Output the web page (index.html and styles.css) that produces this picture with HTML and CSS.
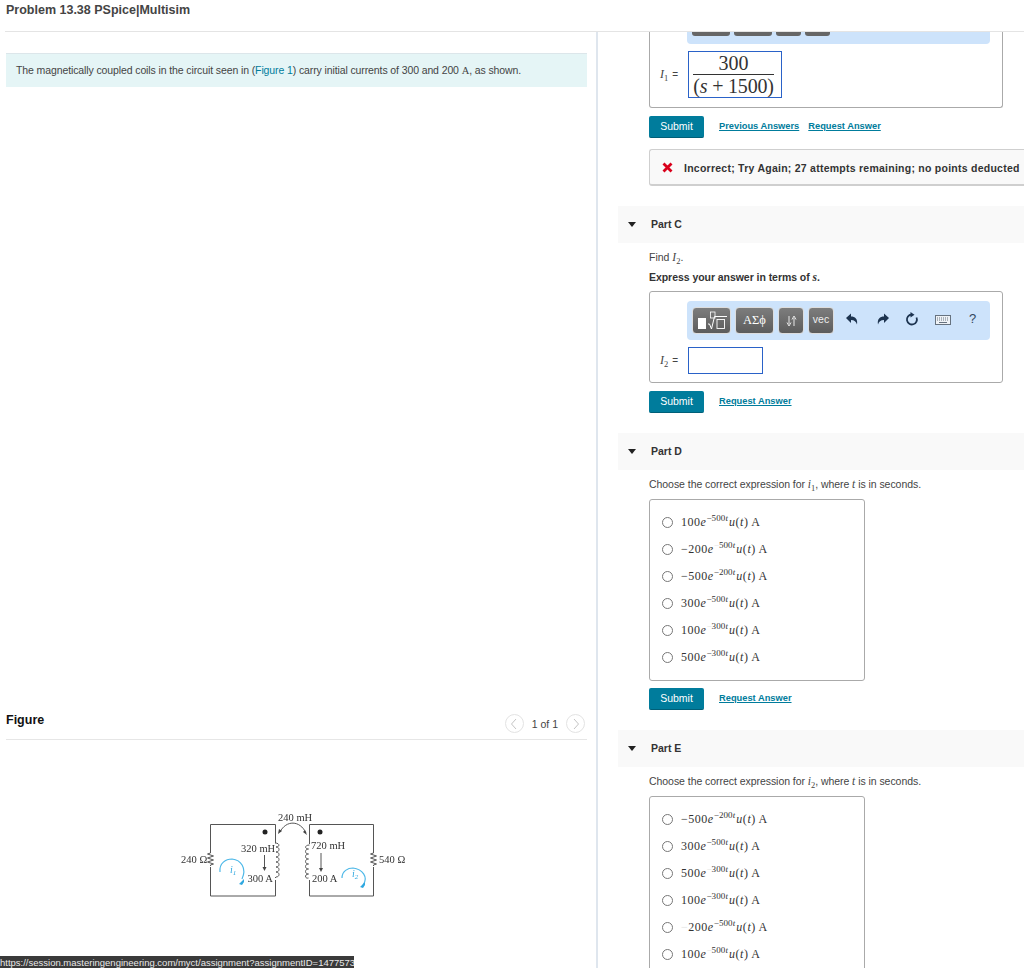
FILE: index.html
```html
<!DOCTYPE html>
<html lang="en">
<head>
<meta charset="utf-8">
<title>Problem 13.38 PSpice|Multisim</title>
<link rel="stylesheet" href="styles.css">
</head>
<body>
<header class="top"><h1>Problem 13.38 PSpice|Multisim</h1></header>
<main class="split">
  <section class="left">
    <p class="intro">The magnetically coupled coils in the circuit seen in (<a href="#f">Figure 1</a>) carry initial currents of 300 and 200 <span class="rm">A</span>, as shown.</p>
    <div class="fighead">
      <h2>Figure</h2>
      <div class="pager">
        <span class="circle"><svg width="8" height="12" viewBox="0 0 8 12"><path d="M6 1 1.500 6 6 11" fill="none" stroke="#c4c4c4" stroke-width="1"/></svg></span>
        <span class="count">1 of 1</span>
        <span class="circle"><svg width="8" height="12" viewBox="0 0 8 12"><path d="M2 1 6.500 6 2 11" fill="none" stroke="#c4c4c4" stroke-width="1"/></svg></span>
      </div>
    </div>
    <svg class="circuit" width="240" height="110" viewBox="0 0 240 110">
      <g fill="none" stroke="#555" stroke-width="1">
        <path d="M105.500 43V24.500H40.500V53M40.500 67V96H105.500V80"/>
        <path d="M139.500 44V24.500H203.500V53M203.500 67V96H139.500V80"/>
        <path d="M40.500 53l-3 1 6 2-6 2 6 2-6 2 6 2-3 1 0 1"/>
        <path d="M203.500 53l-3 1 6 2-6 2 6 2-6 2 6 2-3 1 0 1"/>
        <path d="M105 43c5 0 5 4 1 4 4 0 4 5 0 5 4 0 4 5 0 5 4 0 4 5 0 5 4 0 4 5 0 5 4 0 4 5 0 5 4 0 4 5 0 5l-1 1"/>
        <path d="M139.500 45c-5 0-5 4-1 4-4 0-4 5 0 5-4 0-4 5 0 5-4 0-4 5 0 5-4 0-4 5 0 5-4 0-4 5 0 5-4 0-4 5 0 4"/>
        <path d="M110 32c6-12 20-12 26 1"/>
        <path d="M94.500 55V68M151 53V69"/>
      </g>
      <path d="M108 34l1-5 3 2zM137 35l-4-3 2-2zM92.500 67h4l-2 4zM149 68h4l-2 4z" fill="#444"/>
      <circle cx="95" cy="32" r="2.500" fill="#222"/><circle cx="150" cy="32" r="2.500" fill="#222"/>
      <g fill="none" stroke="#4db8e8" stroke-width="1.200">
        <path d="M50 72c-1-9 6-13 12-13 9 1 15 9 10 20"/>
        <path d="M172 78c0-7 6-10 11-10 9 1 16 9 10 17"/>
      </g>
      <path d="M69 84l5-5 0 3-2 3zM190 87l5-5 0 3-2 3z" fill="#2fa8e0"/>
      <g class="cap">
        <text x="108" y="20.500">240 mH</text>
        <text x="71" y="51.500">320 mH</text>
        <text x="141" y="48.500">720 mH</text>
        <text x="11" y="62.500">240 Ω</text>
        <text x="209" y="62.500">540 Ω</text>
        <text x="77.500" y="81.500">300 A</text>
        <text x="142" y="81.500">200 A</text>
      </g>
      <g class="capi"><text x="60" y="73">i<tspan class="sub" dy="1.500">1</tspan></text><text x="182" y="77">i<tspan class="sub" dy="1.500">2</tspan></text></g>
    </svg>
  </section>
  <section class="right">
    <div class="part-b">
      <div class="answer first">
        <div class="toolbar clipped"><i class="stub w38"></i><i class="stub w38"></i><i class="stub w25"></i><i class="stub w25"></i></div>
        <div class="eq-row">
          <span class="lab"><em>I</em><sub>1</sub>=</span>
          <div class="input filled"><span class="frac"><span class="num">300</span><span class="den">(<em>s</em> + 1500)</span></span></div>
        </div>
      </div>
      <div class="actions"><a class="btn" href="#s">Submit</a><a class="lnk first-lnk" href="#p">Previous Answers</a><a class="lnk" href="#r">Request Answer</a></div>
      <div class="wrong">
        <svg width="11" height="11" viewBox="0 0 11 11"><path d="M1.500 1.500 9.500 9.500M9.500 1.500 1.500 9.500" stroke="#d9001b" stroke-width="2.800"/></svg>
        <span>Incorrect; Try Again; 27 attempts remaining; no points deducted</span>
      </div>
    </div>

    <div class="part"><i class="tri"></i><b>Part C</b></div>
    <div class="body">
      <p class="find">Find <span class="mi">I</span><sub class="ms">2</sub>.</p>
      <p class="express">Express your answer in terms of <span class="mi">s</span>.</p>
      <div class="answer">
        <div class="toolbar">
          <span class="tool t1">
            <i class="blk"></i>
            <svg width="20" height="20" viewBox="0 0 20 20"><g fill="none" stroke="#fff"><path d="M1 13h1.500l2 5L7.500 5.500H20" stroke-width="1"/><rect x="3.500" y="1" width="4.500" height="6" stroke-width=".8"/><rect x="10" y="8.500" width="7.500" height="9" stroke-width=".9"/></g></svg>
          </span>
          <span class="tool t2">ΑΣϕ</span>
          <span class="tool t3"><svg width="11" height="12" viewBox="0 0 11 12"><path d="M3 1V9M1 7.500 3 11 5 7.500M8 11V3M6 4.500 8 1 10 4.500" fill="none" stroke="#e8e8e8" stroke-width="1"/></svg></span>
          <span class="tool t4">vec</span>
          <span class="ico i1"><svg width="14" height="14" viewBox="0 0 14 14"><path d="M1 6 6 1.500V4.500C10 4.500 13 7 12 12.500 11 9.500 9.500 8 6 8V11Z" fill="#1d3450"/></svg></span>
          <span class="ico i2"><svg width="14" height="14" viewBox="0 0 14 14"><path d="M13 6 8 1.500V4.500C4 4.500 1 7 2 12.500 3 9.500 4.500 8 8 8V11Z" fill="#1d3450"/></svg></span>
          <span class="ico i3"><svg width="14" height="14" viewBox="0 0 14 14"><path d="M6.500 2.500A5 5 0 1 0 11.500 5.500" fill="none" stroke="#1d3450" stroke-width="1.800"/><path d="M5.500 0 9.500 2.800 5.500 5.500Z" fill="#1d3450"/></svg></span>
          <span class="ico i4"><svg width="16" height="10" viewBox="0 0 16 10"><rect x=".5" y=".5" width="15" height="9" fill="#eef2f6" stroke="#66727f"/><path d="M2 3h12M2 5h12" stroke="#66727f" stroke-dasharray="1 1"/><path d="M4 7.500h8" stroke="#66727f"/></svg></span>
          <span class="help">?</span>
        </div>
        <div class="eq-row">
          <span class="lab"><em>I</em><sub>2</sub>=</span>
          <div class="input empty"></div>
        </div>
      </div>
      <div class="actions"><a class="btn" href="#s">Submit</a><a class="lnk first-lnk" href="#r">Request Answer</a></div>
    </div>

    <div class="part"><i class="tri"></i><b>Part D</b></div>
    <div class="body">
      <p class="choose">Choose the correct expression for <span class="mi">i</span><sub class="ms">1</sub>, where <span class="mi">t</span> is in seconds.</p>
      <div class="options">
        <div class="opt"><i class="radio"></i><span class="ex">100<em>e</em><sup>−500<em>t</em></sup><em>u</em>(<em>t</em>) A</span></div>
        <div class="opt"><i class="radio"></i><span class="ex">−200<em>e</em><sup><span class="faint">−</span>500<em>t</em></sup><em>u</em>(<em>t</em>) A</span></div>
        <div class="opt"><i class="radio"></i><span class="ex">−500<em>e</em><sup>−200<em>t</em></sup><em>u</em>(<em>t</em>) A</span></div>
        <div class="opt"><i class="radio"></i><span class="ex">300<em>e</em><sup>−500<em>t</em></sup><em>u</em>(<em>t</em>) A</span></div>
        <div class="opt"><i class="radio"></i><span class="ex">100<em>e</em><sup><span class="faint">−</span>300<em>t</em></sup><em>u</em>(<em>t</em>) A</span></div>
        <div class="opt"><i class="radio"></i><span class="ex">500<em>e</em><sup>−300<em>t</em></sup><em>u</em>(<em>t</em>) A</span></div>
      </div>
      <div class="actions tight"><a class="btn" href="#s">Submit</a><a class="lnk first-lnk" href="#r">Request Answer</a></div>
    </div>

    <div class="part"><i class="tri"></i><b>Part E</b></div>
    <div class="body">
      <p class="choose">Choose the correct expression for <span class="mi">i</span><sub class="ms">2</sub>, where <span class="mi">t</span> is in seconds.</p>
      <div class="options">
        <div class="opt"><i class="radio"></i><span class="ex">−500<em>e</em><sup>−200<em>t</em></sup><em>u</em>(<em>t</em>) A</span></div>
        <div class="opt"><i class="radio"></i><span class="ex">300<em>e</em><sup>−500<em>t</em></sup><em>u</em>(<em>t</em>) A</span></div>
        <div class="opt"><i class="radio"></i><span class="ex">500<em>e</em><sup><span class="faint">−</span>300<em>t</em></sup><em>u</em>(<em>t</em>) A</span></div>
        <div class="opt"><i class="radio"></i><span class="ex">100<em>e</em><sup>−300<em>t</em></sup><em>u</em>(<em>t</em>) A</span></div>
        <div class="opt"><i class="radio"></i><span class="ex"><span class="faint">−</span>200<em>e</em><sup>−500<em>t</em></sup><em>u</em>(<em>t</em>) A</span></div>
        <div class="opt"><i class="radio"></i><span class="ex">100<em>e</em><sup><span class="faint">−</span>500<em>t</em></sup><em>u</em>(<em>t</em>) A</span></div>
      </div>
    </div>
  </section>
</main>
<div class="status">https://session.masteringengineering.com/myct/assignment?assignmentID=1477573</div>
</body>
</html>
```
FILE: styles.css
```css
* { box-sizing: border-box; }
html, body { margin: 0; height: 968px; overflow: hidden; background: #fff; }
body { font-family: "Liberation Sans", Arial, sans-serif; font-size: 10.5px; color: #333; position: relative; }
p, h1, h2 { margin: 0; }
a { text-decoration: none; }

.top { height: 32px; margin-left: 5px; border-bottom: 1px solid #e4e4e4; padding: 3px 0 0 1px; }
h1 { font-size: 12.5px; line-height: 15px; font-weight: bold; color: #444; }

.split { display: grid; grid-template-columns: 598px 1fr; height: 936px; }
.left { border-right: 2px solid #dfe6ee; padding: 21px 0 0 6px; height: 936px; overflow: hidden; }
.intro { width: 581px; height: 34px; background: #e5f5f6; border-top: 1px solid #dce6ea; padding-left: 10px; line-height: 32px; font-size: 10.500px; letter-spacing: -.11px; color: #444; white-space: nowrap; }
.intro a { color: #007c9c; }
.rm { font-family: "Liberation Serif", serif; }

.fighead { width: 581px; margin-top: 620px; height: 33px; border-bottom: 1px solid #e6e6e6; display: flex; justify-content: space-between; align-items: flex-start; padding-top: 6px; }
h2 { font-size: 12.5px; line-height: 15px; color: #111; font-weight: bold; }
.pager { display: flex; align-items: center; gap: 8px; padding: 1px 2px 0 0; }
.circle { width: 19px; height: 19px; border: 1px solid #e3e3e3; border-radius: 50%; display: flex; align-items: center; justify-content: center; }
.count { font-size: 10.500px; color: #444; }

.circuit { display: block; margin: 60px 0 0 164px; filter: blur(.3px); }
.cap text { font-family: "Liberation Serif", serif; font-size: 10.500px; fill: #333; }
.capi text { font-family: "Liberation Serif", serif; font-style: italic; font-size: 10px; fill: #2fa8e0; }
.capi .sub { font-size: 7px; }

.right { overflow: hidden; height: 936px; }
.part-b { padding: 0 0 0 51px; }
.answer { width: 354px; height: 92px; border: 1px solid #aaa; border-radius: 3px; padding: 9px 12px 0 10px; }
.answer.first { height: 76px; border-top: 0; border-radius: 0 0 3px 3px; padding-top: 0; }

.toolbar { margin-left: 27px; width: 303px; height: 39px; background: #cde3fb; border-radius: 4px; display: flex; align-items: center; padding-left: 5px; position: relative; }
.toolbar.clipped { height: 12px; border-radius: 0 0 4px 4px; gap: 4px; align-items: flex-start; }
.stub { display: block; height: 4px; background: #666; border-radius: 0 0 3px 3px; }
.w38 { width: 38px; } .w25 { width: 25px; }

.tool { height: 27px; background: linear-gradient(#7d7d7d, #5c5c5c); border: 1px solid #ddd; border-radius: 4px; color: #fff; display: flex; align-items: center; justify-content: center; }
.t1 { width: 39px; margin-right: 4px; gap: 1px; padding-left: 2px; }
.blk { display: block; width: 8px; height: 11px; background: #fff; margin-top: 5px; }
.t2 { width: 39px; margin-right: 4px; font-family: "Liberation Serif", serif; font-size: 12.500px; }
.t3 { width: 26px; margin-right: 4px; }
.t4 { width: 26px; font-size: 10.500px; padding-bottom: 3px; color: #eee; }
.ico { width: 14px; height: 16px; display: flex; align-items: center; justify-content: center; position: absolute; top: 10px; }
.i1 { left: 158px; } .i2 { left: 189px; } .i3 { left: 218px; } .i4 { left: 248px; width: 16px; top: 11px; }
.help { position: absolute; left: 282px; top: 10px; font-size: 13px; line-height: 16px; color: #33475c; }

.eq-row { display: flex; align-items: center; margin-top: 7px; }
.lab { width: 28px; font-size: 10px; color: #444; white-space: nowrap; }
.lab em { font-family: "Liberation Serif", serif; font-size: 12px; }
.lab sub { font-size: 8.500px; line-height: 0; font-family: "Liberation Serif", serif; margin-right: 4px; }
.input { border: 1px solid #2a62c8; }
.input.empty { width: 75px; height: 27px; }
.input.filled { width: 94px; height: 47px; display: flex; justify-content: center; align-items: center; padding-right: 3px; }
.frac { display: flex; flex-direction: column; align-items: stretch; font-family: "Liberation Serif", serif; font-size: 20px; line-height: 22px; color: #333; text-align: center; }
.num { border-bottom: 1px solid #333; height: 23px; }
.den { white-space: nowrap; letter-spacing: -.2px; }

.actions { display: flex; align-items: center; margin-top: 8px; height: 22px; }
.tight { margin-top: 7px; }
.btn { width: 55px; height: 22px; background: #007c9c; border-radius: 2px; color: #fff; font-size: 10.500px; line-height: 21px; text-align: center; border-bottom: 1px solid #005f78; }
.lnk { color: #007c9c; font-size: 9.300px; font-weight: bold; text-decoration: underline; margin: -2px 0 0 9px; }
.first-lnk { margin-left: 15px; }
.wrong { margin-top: 11px; width: 400px; height: 37px; background: #f9f9f9; border: 1px solid #cfcfcf; border-right: 0; border-bottom-width: 2px; border-radius: 3px 0 0 3px; display: flex; align-items: center; padding-left: 12px; gap: 11px; }
.wrong span { font-size: 10.500px; font-weight: bold; color: #333; letter-spacing: .25px; white-space: nowrap; padding-top: 1px; }

.part { margin: 20px 0 0 20px; height: 37px; background: #f9f9f9; display: flex; align-items: center; padding-left: 10px; }
.part b { font-size: 10.500px; color: #333; margin: -1px 0 0 15px; }
.tri { display: block; width: 0; height: 0; border-left: 4px solid transparent; border-right: 4px solid transparent; border-top: 5px solid #222; margin-top: -1px; }
.body { padding-left: 51px; }
.mi { font-family: "Liberation Serif", serif; font-style: italic; font-size: 11.500px; }
.ms { font-family: "Liberation Serif", serif; font-size: 8.500px; line-height: 0; }
.find { padding-top: 8px; line-height: 13px; font-size: 10.500px; color: #444; }
.express { margin: 7px 0; line-height: 13px; font-weight: bold; font-size: 10.500px; letter-spacing: -.05px; color: #333; }
.choose { padding-top: 8px; line-height: 13px; font-size: 10.500px; letter-spacing: -.05px; color: #444; margin-bottom: 8px; }

.options { width: 216px; height: 182px; border: 1px solid #aaa; border-radius: 3px; padding: 9px 0 0 12px; }
.opt { height: 27px; display: flex; align-items: center; }
.radio { display: block; width: 11px; height: 11px; border: 1.500px solid #777; border-radius: 50%; margin-right: 8px; }
.ex { font-family: "Liberation Serif", serif; font-size: 12px; letter-spacing: .52px; color: #333; white-space: nowrap; }
.ex sup { font-size: 9px; line-height: 0; letter-spacing: .1px; margin-right: 1px; }
.faint { color: #e2e2e2; }

.status { position: absolute; left: 0; bottom: 0; width: 354px; height: 12px; background: #3a3a3a; color: #e8e8e8; font-size: 9.500px; line-height: 13px; white-space: nowrap; overflow: hidden; }
```
